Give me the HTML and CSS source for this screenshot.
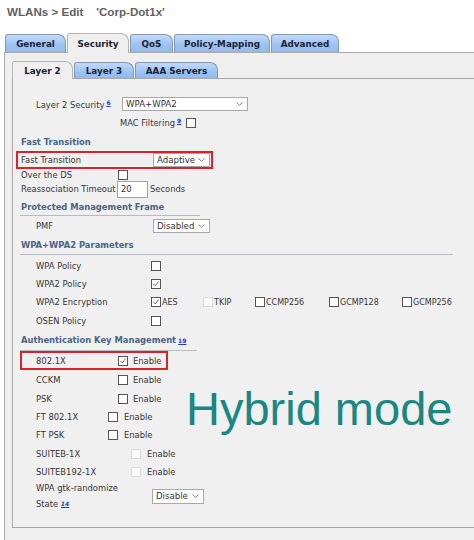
FILE: index.html
```html
<!DOCTYPE html>
<html>
<head>
<meta charset="utf-8">
<title>WLANs Edit</title>
<link rel="stylesheet" href="styles.css">
</head>
<body>
<div class="title">WLANs &gt; Edit &nbsp;&nbsp;&nbsp;'Corp-Dot1x'</div>
<div class="tabs">
  <div class="tab t-general">General</div>
  <div class="tab active t-security">Security</div>
  <div class="tab t-qos">QoS</div>
  <div class="tab t-policy">Policy-Mapping</div>
  <div class="tab t-adv">Advanced</div>
</div>
<div class="panel">
  <div class="tabs sub">
    <div class="tab active t-l2">Layer 2</div>
    <div class="tab t-l3">Layer 3</div>
    <div class="tab t-aaa">AAA Servers</div>
  </div>
  <div class="inner">
    <div class="row r-l2s">
      <span class="lab w86">Layer 2 Security<a class="sup">6</a></span>
      <div class="sel s-l2s"><span>WPA+WPA2</span><svg viewBox="0 0 7 4"><polyline points="0.5,0.5 3.5,3.3 6.5,0.5" fill="none" stroke="#777" stroke-width="0.9"/></svg></div>
    </div>
    <div class="row r-mac">
      <span class="lab w66">MAC Filtering<a class="sup">9</a></span>
      <span class="cb"></span>
    </div>
    <div class="head h-ft">Fast Transition</div>
    <div class="redbox rb-ft">
      <span class="lab w132">Fast Transition</span>
      <div class="sel s-small"><span>Adaptive</span><svg viewBox="0 0 7 4"><polyline points="0.5,0.5 3.5,3.3 6.5,0.5" fill="none" stroke="#777" stroke-width="0.9"/></svg></div>
    </div>
    <div class="row r-ds">
      <span class="lab w97">Over the DS</span>
      <span class="cb"></span>
    </div>
    <div class="row r-reassoc">
      <span class="lab w96">Reassociation Timeout</span>
      <div class="inp">20</div>
      <span class="after">Seconds</span>
    </div>
    <div class="head line h-pmf">Protected Management Frame</div>
    <div class="row r-pmf">
      <span class="lab w117">PMF</span>
      <div class="sel s-small"><span>Disabled</span><svg viewBox="0 0 7 4"><polyline points="0.5,0.5 3.5,3.3 6.5,0.5" fill="none" stroke="#777" stroke-width="0.9"/></svg></div>
    </div>
    <div class="head line h-wpa">WPA+WPA2 Parameters</div>
    <div class="row r-first">
      <span class="lab w115">WPA Policy</span>
      <span class="cb"></span>
    </div>
    <div class="row">
      <span class="lab w115">WPA2 Policy</span>
      <span class="cb"><svg viewBox="0 0 10 10"><polyline points="1.6,4.8 4,7.3 8.4,1.8" fill="none" stroke="#444" stroke-width="1"/></svg></span>
    </div>
    <div class="row">
      <span class="lab w115">WPA2 Encryption</span>
      <div class="enc e-aes"><span class="cb"><svg viewBox="0 0 10 10"><polyline points="1.6,4.8 4,7.3 8.4,1.8" fill="none" stroke="#444" stroke-width="1"/></svg></span>AES</div>
      <div class="enc e-tkip"><span class="cb dis"></span>TKIP</div>
      <div class="enc e-ccmp"><span class="cb"></span>CCMP256</div>
      <div class="enc e-gcmp"><span class="cb"></span>GCMP128</div>
      <div class="enc"><span class="cb"></span>GCMP256</div>
    </div>
    <div class="row r-osen">
      <span class="lab w115">OSEN Policy</span>
      <span class="cb"></span>
    </div>
    <div class="head line h-akm">Authentication Key Management<a class="sup">19</a></div>
    <div class="redbox rb-akm">
      <span class="lab w82">802.1X</span>
      <span class="cb"><svg viewBox="0 0 10 10"><polyline points="1.6,4.8 4,7.3 8.4,1.8" fill="none" stroke="#444" stroke-width="1"/></svg></span>
      <span class="en">Enable</span>
    </div>
    <div class="row r-19">
      <span class="lab w82">CCKM</span>
      <span class="cb"></span>
      <span class="en">Enable</span>
    </div>
    <div class="row r-19">
      <span class="lab w82">PSK</span>
      <span class="cb"></span>
      <span class="en">Enable</span>
    </div>
    <div class="row">
      <span class="lab w72">FT 802.1X</span>
      <span class="cb"></span>
      <span class="en en6">Enable</span>
    </div>
    <div class="row">
      <span class="lab w72">FT PSK</span>
      <span class="cb"></span>
      <span class="en en6">Enable</span>
    </div>
    <div class="row r-19">
      <span class="lab w95">SUITEB-1X</span>
      <span class="cb dis"></span>
      <span class="en en6">Enable</span>
    </div>
    <div class="row">
      <span class="lab w95">SUITEB192-1X</span>
      <span class="cb dis"></span>
      <span class="en en6">Enable</span>
    </div>
    <div class="row r-gtk">
      <span class="lab w116 two">WPA gtk-randomize<br>State <a class="sup sup-inline">14</a></span>
      <div class="sel s-dis"><span>Disable</span><svg viewBox="0 0 7 4"><polyline points="0.5,0.5 3.5,3.3 6.5,0.5" fill="none" stroke="#777" stroke-width="0.9"/></svg></div>
    </div>
  </div>
</div>
<div class="hybrid">Hybrid mode</div>
</body>
</html>
```

FILE: styles.css
```css
* { box-sizing: border-box; }
html { overflow: hidden; }
html, body { margin: 0; padding: 0; background: #ffffff; }
body {
  width: 474px;
  height: 540px;
  position: relative;
  overflow: hidden;
  font-family: "DejaVu Sans", Verdana, sans-serif;
  font-size: 8.4px;
  color: #353535;
}

.title {
  height: 33px;
  padding: 5px 0 0 7px;
  font-family: "Liberation Sans", Arial, sans-serif;
  font-weight: bold;
  font-size: 11.6px;
  line-height: 14px;
  color: #626262;
  white-space: nowrap;
}

.tabs {
  display: flex;
  align-items: flex-end;
  gap: 1px;
  height: 19px;
  padding-left: 5px;
  position: relative;
  z-index: 1;
}
.tab {
  height: 18px;
  border: 1px solid #8499b9;
  border-bottom: none;
  border-radius: 3px 8px 0 0;
  background: linear-gradient(#c2daf9, #9cc1f1 60%, #93baee);
  font-weight: bold;
  font-size: 8.8px;
  color: #1c2434;
  display: flex;
  align-items: center;
  justify-content: center;
  padding-top: 1px;
}
.tab.active {
  height: 20px;
  margin-bottom: -1px;
  background: #efefef;
  border-color: #b4b4b4;
}
.t-general { width: 61px; }
.t-security { width: 62px; }
.t-qos { width: 43px; }
.t-policy { width: 96px; }
.t-adv { width: 68px; }

.panel {
  margin-left: 4px;
  width: 490px;
  height: 500px;
  border: 1px solid #ababab;
  background: #efefef;
  padding: 8px 0 0 7px;
}

.tabs.sub {
  height: 17px;
  padding-left: 0;
}
.sub .tab { height: 16px; }
.sub .tab.active { height: 18px; }
.t-l2 { width: 61px; }
.t-l3 { width: 60px; }
.t-aaa { width: 83px; }

.inner {
  width: 480px;
  height: 450px;
  border: 1px solid #a6a6a6;
  background: #f0f0f0;
}

.row {
  display: flex;
  align-items: center;
  height: 18px;
  padding-left: 23px;
  white-space: nowrap;
}
.r-l2s { margin-top: 16px; }
.r-mac { height: 19px; padding-left: 107px; }
.r-ds { height: 11px; padding-left: 8px; }
.r-reassoc { padding-left: 8px; }
.r-pmf { height: 20px; }
.r-first { margin-top: 2px; }
.r-osen { height: 19px; }
.r-19 { height: 19px; }
.r-gtk { height: 30px; }

.lab { flex: none; white-space: nowrap; }
.w66 { width: 66px; }
.w72 { width: 72px; }
.w82 { width: 82px; }
.w86 { width: 86px; }
.w95 { width: 95px; }
.w96 { width: 96px; }
.w97 { width: 97px; }
.w115 { width: 115px; }
.w116 { width: 116px; }
.w117 { width: 117px; }
.w132 { width: 132px; }
.two { line-height: 15px; }

.sup {
  font-size: 6px;
  font-weight: bold;
  color: #2437d0;
  text-decoration: underline;
  vertical-align: 3px;
  margin-left: 2px;
}
.sup-inline { vertical-align: 1px; font-style: italic; margin-left: 0; }

.head {
  display: flex;
  align-items: center;
  margin-left: 7px;
  padding-left: 1px;
  font-weight: bold;
  font-size: 8.4px;
  color: #4b6584;
  white-space: nowrap;
}
.head.line { border-bottom: 1px solid #b6bac1; }
.h-ft { height: 19px; }
.h-pmf { height: 18px; width: 180px; }
.h-wpa { height: 19px; width: 433px; }
.h-akm { height: 21px; width: 177px; }

.redbox {
  display: flex;
  align-items: center;
  border: 2px solid #d7242c;
  white-space: nowrap;
}
.rb-ft { margin-left: 3px; width: 197px; height: 18px; padding-left: 3px; }
.rb-akm { margin-left: 7px; width: 148px; height: 19px; padding-left: 14px; }

.sel {
  flex: none;
  display: flex;
  align-items: center;
  justify-content: space-between;
  height: 14px;
  border: 1px solid #a8a8a8;
  background: #ffffff;
  padding: 0 4px 0 3px;
  color: #333333;
  font-size: 8.6px;
}
.sel svg { width: 7px; height: 4px; display: block; }
.s-l2s { width: 126px; }
.s-small { width: 57px; }
.s-dis { width: 52px; height: 15px; }

.cb {
  flex: none;
  display: block;
  width: 10px;
  height: 10px;
  border: 1px solid #555555;
  background: #ffffff;
}
.cb svg { display: block; width: 8px; height: 8px; }
.cb.dis { border-color: #dcdcdc; background: #fafafa; }

.inp {
  flex: none;
  width: 31px;
  height: 17px;
  border: 1px solid #a2a2a2;
  background: #ffffff;
  padding-left: 3px;
  display: flex;
  align-items: center;
  color: #333333;
}
.after { margin-left: 2px; }

.enc {
  flex: none;
  display: flex;
  align-items: center;
  gap: 1px;
  font-size: 8px;
}
.e-aes { width: 52px; }
.e-tkip { width: 52px; }
.e-ccmp { width: 74px; }
.e-gcmp { width: 73px; }

.en { margin-left: 5px; }
.en6 { margin-left: 6px; }

.hybrid {
  position: absolute;
  left: 186px;
  top: 385px;
  font-family: "Liberation Sans", Arial, sans-serif;
  font-size: 47px;
  line-height: 47px;
  color: #1a8783;
  white-space: nowrap;
}
```
